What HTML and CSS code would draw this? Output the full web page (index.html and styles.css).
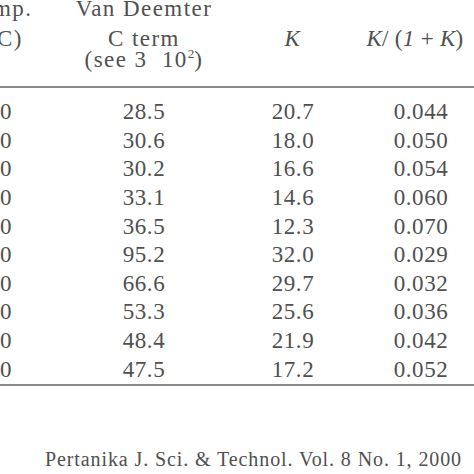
FILE: index.html
```html
<!DOCTYPE html>
<html lang="en">
<head>
    <meta charset="UTF-8">
    <meta name="viewport" content="width=device-width, initial-scale=1.0">
    <title>Table</title>
    <link rel="stylesheet" href="styles.css">
</head>
<body>
    <div id="page">
        <div id="table-head">
            <div class="h r1 c1">Temp.</div>
            <div class="h r2 c1">(°C)</div>
            <div class="h r1 c2">Van Deemter</div>
            <div class="h r2 c2">C term</div>
            <div class="h r3 c2">(see 3 &nbsp;10<sup>2</sup>)</div>
            <div class="h r2 c3"><i>K</i></div>
            <div class="h r2 c4 ratio"><i>K</i>/ (<i>1</i> + <i>K</i>)</div>
        </div>
        <div id="table-body">
            <div class="row"><span>40</span><span>28.5</span><span>20.7</span><span>0.044</span></div>
            <div class="row"><span>50</span><span>30.6</span><span>18.0</span><span>0.050</span></div>
            <div class="row"><span>60</span><span>30.2</span><span>16.6</span><span>0.054</span></div>
            <div class="row"><span>70</span><span>33.1</span><span>14.6</span><span>0.060</span></div>
            <div class="row"><span>80</span><span>36.5</span><span>12.3</span><span>0.070</span></div>
            <div class="row"><span>40</span><span>95.2</span><span>32.0</span><span>0.029</span></div>
            <div class="row"><span>50</span><span>66.6</span><span>29.7</span><span>0.032</span></div>
            <div class="row"><span>60</span><span>53.3</span><span>25.6</span><span>0.036</span></div>
            <div class="row"><span>70</span><span>48.4</span><span>21.9</span><span>0.042</span></div>
            <div class="row"><span>80</span><span>47.5</span><span>17.2</span><span>0.052</span></div>
        </div>
        <div id="footer">Pertanika J. Sci. &amp; Technol. Vol. 8 No. 1, 2000</div>
    </div>
</body>
</html>
```

FILE: styles.css
```css
body {
    margin: 0;
    background-color: white;
    font-family: "Liberation Serif", "Times New Roman", serif;
    color: #505050;
    overflow: hidden;
}
#page {
    width: 474px;
    height: 474px;
}
#table-head {
    display: grid;
    grid-template-columns: 120px 168px 130px 126px;
    grid-template-rows: 30px 21px 18px;
    margin-left: -60px;
    padding-bottom: 17px;
    font-size: 23px;
    letter-spacing: 1.45px;
}
.h {
    line-height: 18px;
    text-align: center;
    white-space: nowrap;
}
.h sup {
    font-size: 13px;
    line-height: 0;
    letter-spacing: 0;
}
.r1 { grid-row: 1; }
.r2 { grid-row: 2; }
.r3 { grid-row: 3; }
.c1 { grid-column: 1; }
.c2 { grid-column: 2; }
.c3 { grid-column: 3; }
.c4 { grid-column: 4; }
.ratio {
    letter-spacing: 0.3px;
    padding-right: 12px;
}
#table-body {
    border-top: 2px solid #8a8a8a;
    border-bottom: 2px solid #8a8a8a;
    padding-top: 10px;
}
.row {
    display: grid;
    grid-template-columns: 120px 168px 130px 126px;
    margin-left: -60px;
    height: 28.65px;
    line-height: 28.65px;
    font-size: 23px;
    letter-spacing: 0.6px;
    text-align: center;
}
#footer {
    margin-top: 61px;
    padding-right: 12px;
    text-align: right;
    font-size: 20px;
    line-height: 24px;
    letter-spacing: 0.9px;
}
```
